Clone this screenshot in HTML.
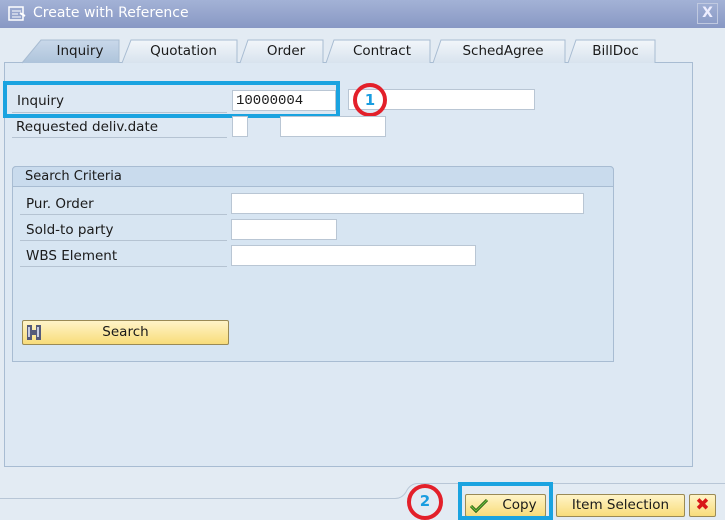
<!DOCTYPE html>
<html><head><style>
*{box-sizing:border-box;margin:0;padding:0}
body{width:725px;height:520px;overflow:hidden;background:#e3ebf3;font-family:"DejaVu Sans","Liberation Sans",sans-serif;font-size:13px;color:#1a1a1a;position:relative}
.a{position:absolute}
.title{left:0;top:0;width:725px;height:28px;background:linear-gradient(#a3b2d6,#8898c4);color:#fff;font-size:14px;padding:5px 0 0 33px}
.tt{top:43px;font-size:13.5px;text-align:center}
.panel{left:4px;top:62px;width:689px;height:405px;background:#dde8f3;border:1px solid #a8bcd2}
.inp{background:#fff;border:1px solid #b9c6d4;height:21px}
.lab{font-size:13.5px}
.line{border-bottom:1px solid #b5c3d2}
.btn{background:linear-gradient(#fff4c8,#f8dc7a);border:1px solid #9a8a55;border-radius:2px;font-size:13.5px;text-align:center}
</style></head><body>
<div class="a title">Create with Reference</div>
<svg class="a" style="left:8px;top:6px" width="20" height="16"><rect x="1" y="1" width="14" height="13" fill="none" stroke="#fff" stroke-width="1.5"/><path d="M4 5h9M4 8h6M4 11h9" stroke="#fff"/><path d="M12 7l5 3" stroke="#fff" stroke-width="2"/></svg>
<div class="a" style="left:697px;top:3px;width:21px;height:21px;border:1px solid #c0c9e0;color:#eef;font-weight:bold;text-align:center;font-size:14px;line-height:19px">X</div>
<div class="a panel"></div>
<svg class="a" style="left:0;top:38px" width="725" height="26">
<defs><linearGradient id="g" x1="0" y1="0" x2="0" y2="1"><stop offset="0" stop-color="#f2f6fa"/><stop offset="1" stop-color="#d8e3ee"/></linearGradient>
<linearGradient id="h" x1="0" y1="0" x2="0" y2="1"><stop offset="0" stop-color="#c9d8ea"/><stop offset="1" stop-color="#aec4db"/></linearGradient></defs>
<g stroke="#a8bcd2" fill="url(#g)">
<path d="M122 25L131 2H237V25"/><path d="M240 25L248 2H323V25"/><path d="M326 25L334 2H430V25"/><path d="M433 25L441 2H565V25"/><path d="M568 25L576 2H655V25"/>
<path d="M22 25L41 2H119V25" fill="url(#h)"/></g></svg>
<div class="a tt" style="left:40px;width:80px">Inquiry</div>
<div class="a tt" style="left:130px;width:107px">Quotation</div>
<div class="a tt" style="left:248px;width:76px">Order</div>
<div class="a tt" style="left:334px;width:96px">Contract</div>
<div class="a tt" style="left:441px;width:124px">SchedAgree</div>
<div class="a tt" style="left:576px;width:79px">BillDoc</div>
<div class="a lab" style="left:17px;top:93px">Inquiry</div>
<div class="a line" style="left:12px;top:112px;width:215px"></div>
<div class="a inp" style="left:232px;top:90px;width:104px;font-family:'Liberation Mono',monospace;font-size:14px;padding:2px 3px">10000004</div>
<div class="a inp" style="left:348px;top:89px;width:187px"></div>
<div class="a" style="left:3px;top:81px;width:337px;height:37px;border:4px solid #1aa3e0"></div>
<div class="a" style="left:353px;top:83px;width:34px;height:34px;border:4px solid #e3202a;border-radius:50%;color:#1a9de0;font-weight:bold;text-align:center;line-height:26px;font-size:15px">1</div>
<div class="a lab" style="left:16px;top:119px">Requested deliv.date</div>
<div class="a line" style="left:12px;top:137px;width:215px"></div>
<div class="a inp" style="left:232px;top:116px;width:16px"></div>
<div class="a inp" style="left:280px;top:116px;width:106px"></div>
<div class="a" style="left:12px;top:166px;width:602px;height:196px;border:1px solid #a8bcd2;border-radius:4px 4px 0 0;background:#d7e5f2"></div>
<div class="a" style="left:12px;top:166px;width:602px;height:21px;background:#c9dbed;border:1px solid #a8bcd2;border-radius:4px 4px 0 0;padding:2px 0 0 12px">Search Criteria</div>
<div class="a lab" style="left:26px;top:196px">Pur. Order</div>
<div class="a line" style="left:20px;top:214px;width:207px"></div>
<div class="a inp" style="left:231px;top:193px;width:353px"></div>
<div class="a lab" style="left:26px;top:222px">Sold-to party</div>
<div class="a line" style="left:20px;top:240px;width:207px"></div>
<div class="a inp" style="left:231px;top:219px;width:106px"></div>
<div class="a lab" style="left:26px;top:248px">WBS Element</div>
<div class="a line" style="left:20px;top:266px;width:207px"></div>
<div class="a inp" style="left:231px;top:245px;width:245px"></div>
<div class="a btn" style="left:22px;top:320px;width:207px;height:25px;line-height:23px">Search</div>
<svg class="a" style="left:26px;top:324px" width="16" height="17"><rect x="1" y="1" width="5" height="15" fill="#555a7a"/><rect x="10" y="1" width="5" height="15" fill="#555a7a"/><rect x="4" y="6" width="8" height="5" fill="#555a7a"/><rect x="2" y="3" width="2" height="10" fill="#c8cce0"/><rect x="11" y="3" width="2" height="10" fill="#c8cce0"/></svg>
<svg class="a" style="left:0;top:478px" width="725" height="42"><path d="M0 20.5H395Q402 20.5 406 14Q410 5.5 418 5.5H725" fill="none" stroke="#b8c6d6"/></svg>
<div class="a" style="left:407px;top:484px;width:36px;height:36px;border:4px solid #e3202a;border-radius:50%;color:#1a9de0;font-weight:bold;text-align:center;line-height:27px;font-size:15px;background:#e3ebf3">2</div>
<div class="a btn" style="left:465px;top:494px;width:81px;height:23px;line-height:21px;padding-left:28px">Copy</div>
<svg class="a" style="left:469px;top:497px" width="20" height="16"><path d="M2 9l5 5L18 3" fill="none" stroke="#1f5a10" stroke-width="3"/><path d="M2 9l5 5L18 3" fill="none" stroke="#6fb83a" stroke-width="1.3"/></svg>
<div class="a" style="left:458px;top:482px;width:95px;height:38px;border:4px solid #1aa3e0"></div>
<div class="a btn" style="left:556px;top:494px;width:129px;height:23px;line-height:21px">Item Selection</div>
<div class="a btn" style="left:689px;top:494px;width:27px;height:23px;line-height:21px;color:#d81818;font-weight:bold;font-size:17px">✖</div>
</body></html>
